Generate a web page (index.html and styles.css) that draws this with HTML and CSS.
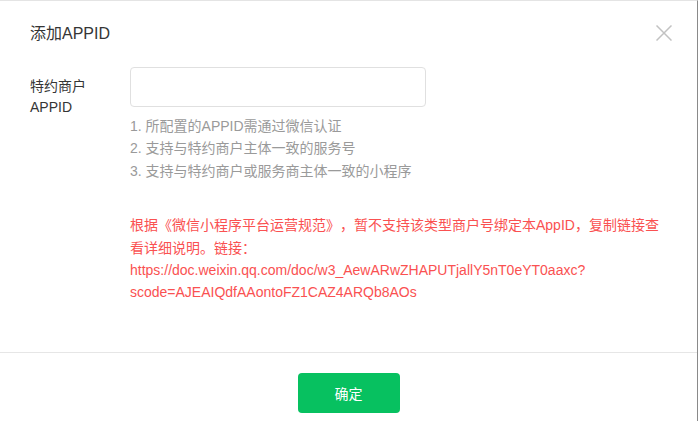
FILE: index.html
```html
<!DOCTYPE html>
<html lang="zh-CN">
<head>
<meta charset="utf-8">
<title>添加APPID</title>
<link rel="stylesheet" href="styles.css">
</head>
<body>
<div class="dialog">
  <div class="dialog-hd">
    <h3 class="dialog-title">添加APPID</h3>
    <button class="dialog-close" type="button" aria-label="关闭">
      <svg width="16" height="16" viewBox="0 0 16 16"><path d="M0.5 0.5L15.5 15.5M15.5 0.5L0.5 15.5" stroke="#c2c2c2" stroke-width="1.5" fill="none"/></svg>
    </button>
  </div>
  <div class="dialog-bd">
    <div class="form-row">
      <label class="form-label">特约商户<br>APPID</label>
      <div class="form-content">
        <input class="form-input" type="text">
        <ol class="form-tips">
          <li>1. 所配置的APPID需通过微信认证</li>
          <li>2. 支持与特约商户主体一致的服务号</li>
          <li>3. 支持与特约商户或服务商主体一致的小程序</li>
        </ol>
        <p class="form-warn">根据《微信小程序平台运营规范》，暂不支持该类型商户号绑定本AppID，复制链接查看详细说明。链接：https://doc.weixin.qq.com/doc/w3_AewARwZHAPUTjallY5nT0eYT0aaxc?<wbr>scode=AJEAIQdfAAontoFZ1CAZ4ARQb8AOs</p>
      </div>
    </div>
  </div>
  <div class="dialog-ft">
    <button class="btn-primary" type="button">确定</button>
  </div>
</div>
</body>
</html>
```
FILE: styles.css
```css
html, body {
  margin: 0;
  padding: 0;
  background: #fff;
}
body {
  font-family: "Liberation Sans", "Noto Sans CJK SC", sans-serif;
  font-size: 14px;
  color: #353535;
  text-spacing-trim: space-all;
}
.dialog {
  width: 698px;
  height: 421px;
  box-sizing: border-box;
  border-top: 1px solid #e4e4e4;
  border-right: 1px solid #8a8a8a;
  background: #fff;
}
.dialog-hd {
  display: flex;
  align-items: flex-start;
  justify-content: space-between;
  padding: 23px 25px 0 30px;
}
.dialog-title {
  margin: 0;
  font-size: 16px;
  font-weight: normal;
  line-height: 20px;
  color: #353535;
}
.dialog-close {
  margin: 1px 0 0;
  padding: 0;
  border: 0;
  background: none;
  width: 16px;
  height: 16px;
  display: block;
}
.dialog-close svg { display: block; }
.dialog-bd {
  padding: 23px 30px 0 30px;
  height: 309px;
  box-sizing: border-box;
  border-bottom: 1px solid #e6e6e6;
}
.form-row {
  display: flex;
}
.form-label {
  width: 100px;
  flex: none;
  padding-top: 9px;
  line-height: 21px;
  color: #353535;
}
.form-content {
  width: 538px;
}
.form-input {
  display: block;
  box-sizing: border-box;
  width: 296px;
  height: 40px;
  margin: 0;
  border: 1px solid #e0e0e0;
  border-radius: 4px;
  outline: none;
  background: #fff;
}
.form-tips {
  list-style: none;
  margin: 8px 0 0;
  padding: 0;
  color: #9a9a9a;
  line-height: 22.4px;
}
.form-warn {
  margin: 32px 0 0;
  color: #fa5151;
  line-height: 22.4px;
}
.dialog-ft {
  display: flex;
  justify-content: center;
  padding-top: 20px;
}
.btn-primary {
  width: 102px;
  height: 40px;
  border: 0;
  border-radius: 4px;
  background: #07c160;
  color: #fff;
  font-family: "Liberation Sans", "Noto Sans CJK SC", sans-serif;
  font-size: 14px;
  padding: 0;
}
```
